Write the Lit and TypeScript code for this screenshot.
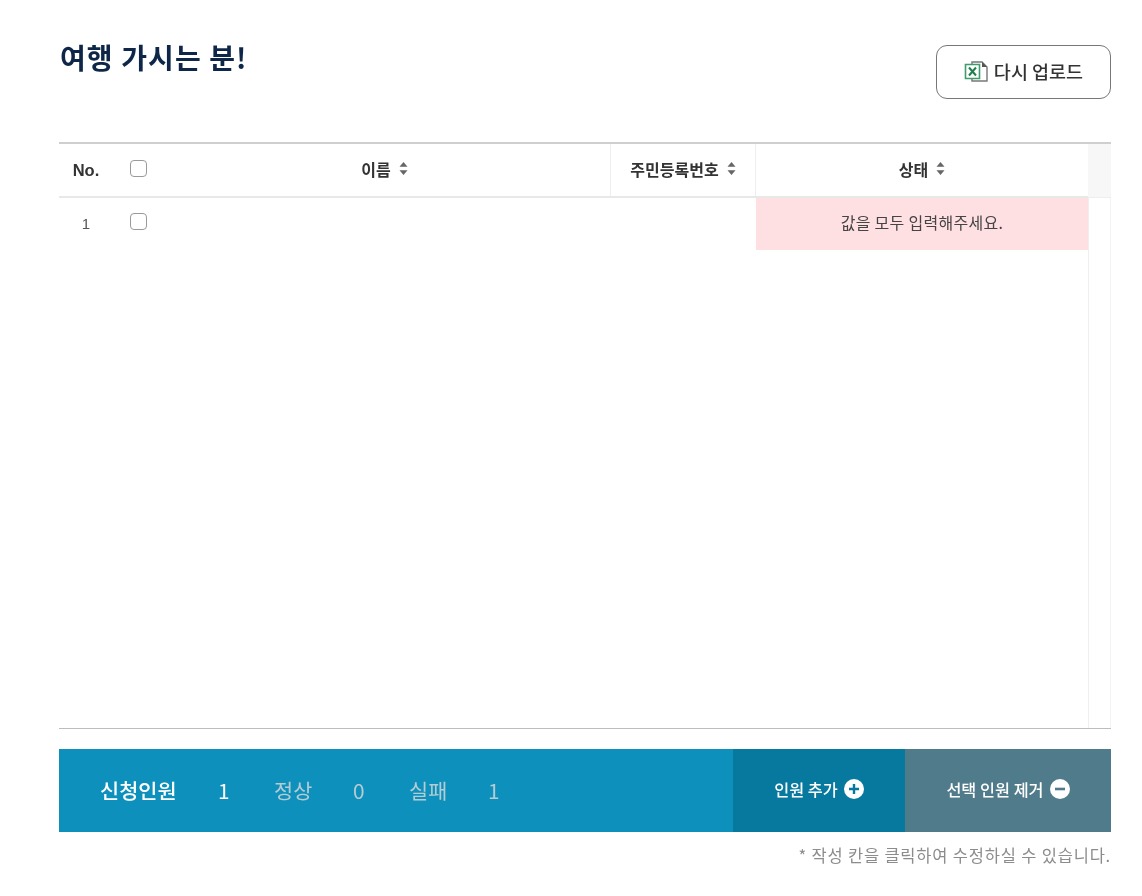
import { LitElement, html, css } from "lit";
import { customElement } from "lit/decorators.js";

const sort = html`<svg class="sort" width="9" height="15" viewBox="0 0 9 15"><path d="M4.5 1 8.5 5.8H.5Z M4.5 14 .5 9.2H8.5Z" fill="#666"/></svg>`;

@customElement("app-root")
export class AppRoot extends LitElement {
  static styles = css`
    :host { display: block; width: 1142px; height: 896px; box-sizing: border-box; padding: 0 31px 0 59px; background: #fff; font-family: "Noto Sans CJK KR", "Noto Sans", sans-serif; color: #333; overflow: hidden; filter: blur(0.6px); }
    .top { display: flex; justify-content: space-between; align-items: flex-start; height: 142px; padding-top: 37px; box-sizing: border-box; }
    h1 { margin: 0 0 0 1px; font-size: 28px; line-height: 40px; font-weight: 700; color: #0e2748; letter-spacing: 1.1px; }
    .upload { margin-top: 8px; width: 175px; height: 54px; box-sizing: border-box; border: 1.5px solid #777; border-radius: 11px; background: #fff; display: flex; align-items: center; justify-content: center; gap: 4px; font: 500 18.5px "Noto Sans CJK KR", sans-serif; color: #333; padding: 0 0 3px; }
    .table { height: 587px; border-top: 2px solid #cfcfcf; border-bottom: 1px solid #bdbdbd; display: grid; grid-template-columns: 1fr 23px; box-sizing: border-box; }
    .main { display: flex; flex-direction: column; }
    .gutter { border-left: 1px solid #efefef; border-right: 1px solid #f3f3f3; }
    .gutter-head { height: 53px; background: #f7f7f7; border-bottom: 1px solid #eee; margin-left: -1px; margin-right: -1px; }
    .row { display: grid; grid-template-columns: 54px 46px 452px 145px 332px; }
    .head { height: 54px; border-bottom: 2px solid #e8e8e8; box-sizing: border-box; font-size: 16px; font-weight: 700; color: #333; }
    .cell { display: flex; align-items: center; justify-content: center; gap: 8px; }
    .head .cell { padding-bottom: 3px; }
    .head .b { border-right: 1px solid #eee; }
    .head .no { font-family: "Liberation Sans", sans-serif; font-size: 16.5px; padding-bottom: 0; }
    .body { height: 52px; font-size: 14px; color: #444; }
    .n { font-family: "Liberation Sans", sans-serif; font-size: 15px; color: #555; padding-bottom: 2px; }
    .box { width: 17px; height: 17px; box-sizing: border-box; border: 1.5px solid #9a9a9a; border-radius: 4px; background: #fff; margin-left: 5px; }
    .body .box { margin-bottom: 5px; }
    .err { background: #ffe0e2; color: #444; font-size: 16px; letter-spacing: 0.3px; padding-bottom: 5px; }
    .bar { margin-top: 20px; height: 83px; display: flex; background: #0d90bc; color: #fff; }
    .stats { flex: 1; display: flex; align-items: center; padding-left: 41px; font-size: 20.8px; padding-bottom: 1px; }
    .stats span { display: block; }
    .lbl { color: #fff; font-weight: 500; width: 118px; }
    .num1 { width: 56px; color: #fff; }
    .lbl2 { width: 79px; color: #b5ccd3; }
    .num2 { width: 56px; color: #b5ccd3; }
    .btn { display: flex; align-items: center; justify-content: center; gap: 6px; font-size: 16.3px; font-weight: 500; color: #fff; padding-bottom: 4px; box-sizing: border-box; }
    .add { width: 172px; background: #07799f; }
    .rem { width: 206px; background: #4f7b8a; }
    .note { margin-top: 12px; text-align: right; font-size: 16.5px; letter-spacing: 0.8px; line-height: 22px; color: #8c8c8c; }
  `;

  render() {
    return html`
      <div class="top">
        <h1>여행 가시는 분!</h1>
        <div class="upload">
          <svg width="26" height="24" viewBox="0 0 26 24" fill="none">
            <path d="M8 3H18L23 8V22H8Z" fill="#fff" stroke="#777" stroke-width="1.4"/>
            <path d="M18 3V8H23Z" fill="#555"/>
            <path d="M1.5 5.5H15.5V19.5H1.5Z" fill="#fff" stroke="#3f9c6c" stroke-width="1.6"/>
            <path d="M5 8.5 12 16.5M12 8.5 5 16.5" stroke="#1f7f4d" stroke-width="2"/>
          </svg>
          다시 업로드
        </div>
      </div>
      <div class="table">
        <div class="main">
          <div class="row head">
            <div class="cell no">No.</div>
            <div class="cell"><div class="box"></div></div>
            <div class="cell b">이름 ${sort}</div>
            <div class="cell b">주민등록번호 ${sort}</div>
            <div class="cell">상태 ${sort}</div>
          </div>
          <div class="row body">
            <div class="cell n">1</div>
            <div class="cell"><div class="box"></div></div>
            <div class="cell"></div>
            <div class="cell"></div>
            <div class="cell err">값을 모두 입력해주세요.</div>
          </div>
        </div>
        <div class="gutter"><div class="gutter-head"></div></div>
      </div>
      <div class="bar">
        <div class="stats">
          <span class="lbl">신청인원</span><span class="num1">1</span>
          <span class="lbl2">정상</span><span class="num2">0</span>
          <span class="lbl2">실패</span><span class="num2">1</span>
        </div>
        <div class="btn add">인원 추가
          <svg width="20" height="20" viewBox="0 0 20 20"><circle cx="10" cy="10" r="10" fill="#fff"/><path d="M10 5V15M5 10H15" stroke="#07799f" stroke-width="2.4"/></svg>
        </div>
        <div class="btn rem">선택 인원 제거
          <svg width="20" height="20" viewBox="0 0 20 20"><circle cx="10" cy="10" r="10" fill="#fff"/><path d="M5 10H15" stroke="#4f7b8a" stroke-width="2.6"/></svg>
        </div>
      </div>
      <div class="note">* 작성 칸을 클릭하여 수정하실 수 있습니다.</div>
    `;
  }
}
